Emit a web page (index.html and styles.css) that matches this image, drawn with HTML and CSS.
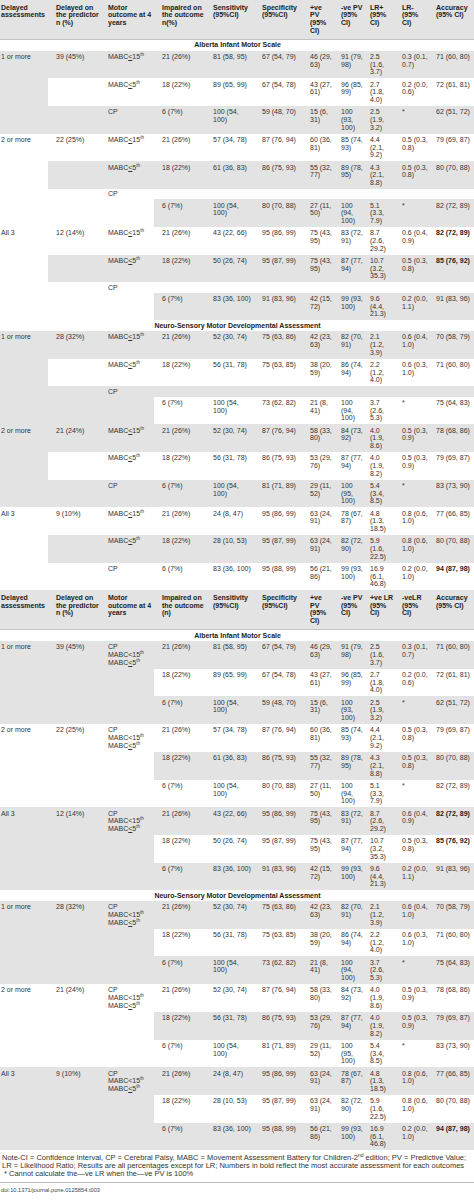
FILE: index.html
```
<!DOCTYPE html>
<html>
<head>
<meta charset="utf-8">
<link rel="stylesheet" href="styles.css">
</head>
<body>
<table class="tbl">
<colgroup><col class="c1"><col class="c2"><col class="c3"><col class="c4"><col class="c5"><col class="c6"><col class="c7"><col class="c8"><col class="c9"><col class="c10"><col class="c11"></colgroup>
<thead>
<tr><th>Delayed<br>assessments</th><th>Delayed on<br>the predictor<br>n (%)</th><th>Motor<br>outcome at 4<br>years</th><th>Impaired on<br>the outcome<br>n(%)</th><th>Sensitivity<br>(95%CI)</th><th>Specificity<br>(95%CI)</th><th>+ve<br>PV<br>(95%<br>CI)</th><th>-ve PV<br>(95%<br>CI)</th><th>LR+<br>(95%<br>CI)</th><th>LR-<br>(95%<br>CI)</th><th>Accuracy<br>(95% CI)</th></tr>
</thead>
<tbody>
<tr class="sec"><td colspan="11">Alberta Infant Motor Scale</td></tr>
<tr class="g"><td rowspan="3">1 or more</td><td>39 (45%)</td><td>MABC<u>&lt;</u>15<sup>th</sup></td><td>21 (26%)</td><td>81 (58, 95)</td><td>67 (54, 79)</td><td>46 (29,<br>63)</td><td>91 (79,<br>98)</td><td>2.5<br>(1.6,<br>3.7)</td><td>0.3 (0.1,<br>0.7)</td><td>71 (60, 80)</td></tr>
<tr><td></td><td>MABC<u>&lt;</u>5<sup>th</sup></td><td>18 (22%)</td><td>89 (65, 99)</td><td>67 (54, 78)</td><td>43 (27,<br>61)</td><td>96 (85,<br>99)</td><td>2.7<br>(1.8,<br>4.0)</td><td>0.2 (0.0,<br>0.6)</td><td>72 (61, 81)</td></tr>
<tr class="g"><td></td><td>CP</td><td>6 (7%)</td><td>100 (54,<br>100)</td><td>59 (48, 70)</td><td>15 (6,<br>31)</td><td>100<br>(93,<br>100)</td><td>2.5<br>(1.9,<br>3.2)</td><td>*</td><td>62 (51, 72)</td></tr>
<tr><td rowspan="4">2 or more</td><td>22 (25%)</td><td>MABC<u>&lt;</u>15<sup>th</sup></td><td>21 (26%)</td><td>57 (34, 78)</td><td>87 (76, 94)</td><td>60 (36,<br>81)</td><td>85 (74,<br>93)</td><td>4.4<br>(2.1,<br>9.2)</td><td>0.5 (0.3,<br>0.8)</td><td>79 (69, 87)</td></tr>
<tr class="g"><td></td><td>MABC<u>&lt;</u>5<sup>th</sup></td><td>18 (22%)</td><td>61 (36, 83)</td><td>86 (75, 93)</td><td>55 (32,<br>77)</td><td>89 (78,<br>95)</td><td>4.3<br>(2.1,<br>8.8)</td><td>0.5 (0.3,<br>0.8)</td><td>80 (70, 88)</td></tr>
<tr class="lbl"><td></td><td>CP</td><td colspan="8"></td></tr>
<tr class="g"><td class="w"></td><td class="w"></td><td>6 (7%)</td><td>100 (54,<br>100)</td><td>80 (70, 88)</td><td>27 (11,<br>50)</td><td>100<br>(94,<br>100)</td><td>5.1<br>(3.3,<br>7.9)</td><td>*</td><td>82 (72, 89)</td></tr>
<tr><td rowspan="4">All 3</td><td>12 (14%)</td><td>MABC<u>&lt;</u>15<sup>th</sup></td><td>21 (26%)</td><td>43 (22, 66)</td><td>95 (86, 99)</td><td>75 (43,<br>95)</td><td>83 (72,<br>91)</td><td>8.7<br>(2.6,<br>29.2)</td><td>0.6 (0.4,<br>0.9)</td><td><b>82 (72, 89)</b></td></tr>
<tr class="g"><td></td><td>MABC<u>&lt;</u>5<sup>th</sup></td><td>18 (22%)</td><td>50 (26, 74)</td><td>95 (87, 99)</td><td>75 (43,<br>95)</td><td>87 (77,<br>94)</td><td>10.7<br>(3.2,<br>35.3)</td><td>0.5 (0.3,<br>0.8)</td><td><b>85 (76, 92)</b></td></tr>
<tr class="lbl"><td></td><td>CP</td><td colspan="8"></td></tr>
<tr class="g"><td class="w"></td><td class="w"></td><td>6 (7%)</td><td>83 (36, 100)</td><td>91 (83, 96)</td><td>42 (15,<br>72)</td><td>99 (93,<br>100)</td><td>9.6<br>(4.4,<br>21.3)</td><td>0.2 (0.0,<br>1.1)</td><td>91 (83, 96)</td></tr>
<tr class="sec"><td colspan="11">Neuro-Sensory Motor Developmental Assessment</td></tr>
<tr class="g"><td rowspan="4">1 or more</td><td>28 (32%)</td><td>MABC<u>&lt;</u>15<sup>th</sup></td><td>21 (26%)</td><td>52 (30, 74)</td><td>75 (63, 86)</td><td>42 (23,<br>63)</td><td>82 (70,<br>91)</td><td>2.1<br>(1.2,<br>3.9)</td><td>0.6 (0.4,<br>1.0)</td><td>70 (58, 79)</td></tr>
<tr><td></td><td>MABC<u>&lt;</u>5<sup>th</sup></td><td>18 (22%)</td><td>56 (31, 78)</td><td>75 (63, 85)</td><td>38 (20,<br>59)</td><td>86 (74,<br>94)</td><td>2.2<br>(1.2,<br>4.0)</td><td>0.6 (0.3,<br>1.0)</td><td>71 (60, 80)</td></tr>
<tr class="lbl g"><td></td><td>CP</td><td colspan="8"></td></tr>
<tr><td class="g"></td><td class="g"></td><td>6 (7%)</td><td>100 (54,<br>100)</td><td>73 (62, 82)</td><td>21 (8,<br>41)</td><td>100<br>(94,<br>100)</td><td>3.7<br>(2.6,<br>5.3)</td><td>*</td><td>75 (64, 83)</td></tr>
<tr class="g"><td rowspan="3">2 or more</td><td>21 (24%)</td><td>MABC<u>&lt;</u>15<sup>th</sup></td><td>21 (26%)</td><td>52 (30, 74)</td><td>87 (76, 94)</td><td>58 (33,<br>80)</td><td>84 (73,<br>92)</td><td>4.0<br>(1.9,<br>8.6)</td><td>0.5 (0.3,<br>0.9)</td><td>78 (68, 86)</td></tr>
<tr><td></td><td>MABC<u>&lt;</u>5<sup>th</sup></td><td>18 (22%)</td><td>56 (31, 78)</td><td>86 (75, 93)</td><td>53 (29,<br>76)</td><td>87 (77,<br>94)</td><td>4.0<br>(1.9,<br>8.2)</td><td>0.5 (0.3,<br>0.9)</td><td>79 (69, 87)</td></tr>
<tr class="g"><td></td><td>CP</td><td>6 (7%)</td><td>100 (54,<br>100)</td><td>81 (71, 89)</td><td>29 (11,<br>52)</td><td>100<br>(95,<br>100)</td><td>5.4<br>(3.4,<br>8.5)</td><td>*</td><td>83 (73, 90)</td></tr>
<tr><td rowspan="3">All 3</td><td>9 (10%)</td><td>MABC<u>&lt;</u>15<sup>th</sup></td><td>21 (26%)</td><td>24 (8, 47)</td><td>95 (86, 99)</td><td>63 (24,<br>91)</td><td>78 (67,<br>87)</td><td>4.8<br>(1.3,<br>18.5)</td><td>0.8 (0.6,<br>1.0)</td><td>77 (66, 85)</td></tr>
<tr class="g"><td></td><td>MABC<u>&lt;</u>5<sup>th</sup></td><td>18 (22%)</td><td>28 (10, 53)</td><td>95 (87, 99)</td><td>63 (24,<br>91)</td><td>82 (72,<br>90)</td><td>5.9<br>(1.6,<br>22.5)</td><td>0.8 (0.6,<br>1.0)</td><td>80 (70, 88)</td></tr>
<tr><td></td><td>CP</td><td>6 (7%)</td><td>83 (36, 100)</td><td>95 (88, 99)</td><td>56 (21,<br>86)</td><td>99 (93,<br>100)</td><td>16.9<br>(6.1,<br>46.8)</td><td>0.2 (0.0,<br>1.0)</td><td><b>94 (87, 98)</b></td></tr>
</tbody>
</table>
<table class="tbl">
<colgroup><col class="c1"><col class="c2"><col class="c3"><col class="c4"><col class="c5"><col class="c6"><col class="c7"><col class="c8"><col class="c9"><col class="c10"><col class="c11"></colgroup>
<thead>
<tr><th>Delayed<br>assessments</th><th>Delayed on<br>the predictor<br>n (%)</th><th>Motor<br>outcome at 4<br>years</th><th>Impaired on<br>the outcome<br>(n)</th><th>Sensitivity<br>(95%CI)</th><th>Specificity<br>(95%CI)</th><th>+ve<br>PV<br>(95%<br>CI)</th><th>-ve PV<br>(95%<br>CI)</th><th>+ve LR<br>(95%<br>CI)</th><th>-veLR<br>(95%<br>CI)</th><th>Accuracy<br>(95% CI)</th></tr>
</thead>
<tbody>
<tr class="sec"><td colspan="11">Alberta Infant Motor Scale</td></tr>
<tr class="g"><td rowspan="3">1 or more</td><td rowspan="3">39 (45%)</td><td rowspan="3">CP<br>MABC&lt;15<sup>th</sup><br>MABC<u>&lt;</u>5<sup>th</sup></td><td>21 (26%)</td><td>81 (58, 95)</td><td>67 (54, 79)</td><td>46 (29,<br>63)</td><td>91 (79,<br>98)</td><td>2.5<br>(1.6,<br>3.7)</td><td>0.3 (0.1,<br>0.7)</td><td>71 (60, 80)</td></tr>
<tr><td>18 (22%)</td><td>89 (65, 99)</td><td>67 (54, 78)</td><td>43 (27,<br>61)</td><td>96 (85,<br>99)</td><td>2.7<br>(1.8,<br>4.0)</td><td>0.2 (0.0,<br>0.6)</td><td>72 (61, 81)</td></tr>
<tr class="g"><td>6 (7%)</td><td>100 (54,<br>100)</td><td>59 (48, 70)</td><td>15 (6,<br>31)</td><td>100<br>(93,<br>100)</td><td>2.5<br>(1.9,<br>3.2)</td><td>*</td><td>62 (51, 72)</td></tr>
<tr><td rowspan="3">2 or more</td><td rowspan="3">22 (25%)</td><td rowspan="3">CP<br>MABC&lt;15<sup>th</sup><br>MABC<u>&lt;</u>5<sup>th</sup></td><td>21 (26%)</td><td>57 (34, 78)</td><td>87 (76, 94)</td><td>60 (36,<br>81)</td><td>85 (74,<br>93)</td><td>4.4<br>(2.1,<br>9.2)</td><td>0.5 (0.3,<br>0.8)</td><td>79 (69, 87)</td></tr>
<tr class="g"><td>18 (22%)</td><td>61 (36, 83)</td><td>86 (75, 93)</td><td>55 (32,<br>77)</td><td>89 (78,<br>95)</td><td>4.3<br>(2.1,<br>8.8)</td><td>0.5 (0.3,<br>0.8)</td><td>80 (70, 88)</td></tr>
<tr><td>6 (7%)</td><td>100 (54,<br>100)</td><td>80 (70, 88)</td><td>27 (11,<br>50)</td><td>100<br>(94,<br>100)</td><td>5.1<br>(3.3,<br>7.9)</td><td>*</td><td>82 (72, 89)</td></tr>
<tr class="g"><td rowspan="3">All 3</td><td rowspan="3">12 (14%)</td><td rowspan="3">CP<br>MABC&lt;15<sup>th</sup><br>MABC<u>&lt;</u>5<sup>th</sup></td><td>21 (26%)</td><td>43 (22, 66)</td><td>95 (86, 99)</td><td>75 (43,<br>95)</td><td>83 (72,<br>91)</td><td>8.7<br>(2.6,<br>29.2)</td><td>0.6 (0.4,<br>0.9)</td><td><b>82 (72, 89)</b></td></tr>
<tr><td>18 (22%)</td><td>50 (26, 74)</td><td>95 (87, 99)</td><td>75 (43,<br>95)</td><td>87 (77,<br>94)</td><td>10.7<br>(3.2,<br>35.3)</td><td>0.5 (0.3,<br>0.8)</td><td><b>85 (76, 92)</b></td></tr>
<tr class="g"><td>6 (7%)</td><td>83 (36, 100)</td><td>91 (83, 96)</td><td>42 (15,<br>72)</td><td>99 (93,<br>100)</td><td>9.6<br>(4.4,<br>21.3)</td><td>0.2 (0.0,<br>1.1)</td><td>91 (83, 96)</td></tr>
<tr class="sec"><td colspan="11">Neuro-Sensory Motor Developmental Assessment</td></tr>
<tr class="g"><td rowspan="3">1 or more</td><td rowspan="3">28 (32%)</td><td rowspan="3">CP<br>MABC&lt;15<sup>th</sup><br>MABC<u>&lt;</u>5<sup>th</sup></td><td>21 (26%)</td><td>52 (30, 74)</td><td>75 (63, 86)</td><td>42 (23,<br>63)</td><td>82 (70,<br>91)</td><td>2.1<br>(1.2,<br>3.9)</td><td>0.6 (0.4,<br>1.0)</td><td>70 (58, 79)</td></tr>
<tr><td>18 (22%)</td><td>56 (31, 78)</td><td>75 (63, 85)</td><td>38 (20,<br>59)</td><td>86 (74,<br>94)</td><td>2.2<br>(1.2,<br>4.0)</td><td>0.6 (0.3,<br>1.0)</td><td>71 (60, 80)</td></tr>
<tr class="g"><td>6 (7%)</td><td>100 (54,<br>100)</td><td>73 (62, 82)</td><td>21 (8,<br>41)</td><td>100<br>(94,<br>100)</td><td>3.7<br>(2.6,<br>5.3)</td><td>*</td><td>75 (64, 83)</td></tr>
<tr><td rowspan="3">2 or more</td><td rowspan="3">21 (24%)</td><td rowspan="3">CP<br>MABC&lt;15<sup>th</sup><br>MABC<u>&lt;</u>5<sup>th</sup></td><td>21 (26%)</td><td>52 (30, 74)</td><td>87 (76, 94)</td><td>58 (33,<br>80)</td><td>84 (73,<br>92)</td><td>4.0<br>(1.9,<br>8.6)</td><td>0.5 (0.3,<br>0.9)</td><td>78 (68, 86)</td></tr>
<tr class="g"><td>18 (22%)</td><td>56 (31, 78)</td><td>86 (75, 93)</td><td>53 (29,<br>76)</td><td>87 (77,<br>94)</td><td>4.0<br>(1.9,<br>8.2)</td><td>0.5 (0.3,<br>0.9)</td><td>79 (69, 87)</td></tr>
<tr><td>6 (7%)</td><td>100 (54,<br>100)</td><td>81 (71, 89)</td><td>29 (11,<br>52)</td><td>100<br>(95,<br>100)</td><td>5.4<br>(3.4,<br>8.5)</td><td>*</td><td>83 (73, 90)</td></tr>
<tr class="g"><td rowspan="3">All 3</td><td rowspan="3">9 (10%)</td><td rowspan="3">CP<br>MABC&lt;15<sup>th</sup><br>MABC<u>&lt;</u>5<sup>th</sup></td><td>21 (26%)</td><td>24 (8, 47)</td><td>95 (86, 99)</td><td>63 (24,<br>91)</td><td>78 (67,<br>87)</td><td>4.8<br>(1.3,<br>18.5)</td><td>0.8 (0.6,<br>1.0)</td><td>77 (66, 85)</td></tr>
<tr><td>18 (22%)</td><td>28 (10, 53)</td><td>95 (87, 99)</td><td>63 (24,<br>91)</td><td>82 (72,<br>90)</td><td>5.9<br>(1.6,<br>22.5)</td><td>0.8 (0.6,<br>1.0)</td><td>80 (70, 88)</td></tr>
<tr class="g"><td>6 (7%)</td><td>83 (36, 100)</td><td>95 (88, 99)</td><td>56 (21,<br>86)</td><td>99 (93,<br>100)</td><td>16.9<br>(6.1,<br>46.8)</td><td>0.2 (0.0,<br>1.0)</td><td><b>94 (87, 98)</b></td></tr>
</tbody>
</table>
<div class="notes">
<p>Note-CI = Confidence Interval, CP = Cerebral Palsy, MABC = Movement Assessment Battery for Children-2<sup>nd</sup> edition; PV = Predictive Value;</p>
<p>LR = Likelihood Ratio; Results are all percentages except for LR; Numbers in bold reflect the most accurate assessment for each outcomes</p>
<p class="star">* Cannot calculate the—ve LR when the—ve PV is 100%</p>
</div>
<div class="doi">doi:10.1371/journal.pone.0125854.t003</div>
</body>
</html>
```
FILE: styles.css
```
html, body {
  margin: 0;
  padding: 0;
  background: #fff;
}
body {
  font-family: "Liberation Sans", Arial, sans-serif;
  font-size: 7px;
  line-height: 7.7px;
  color: #333;
  overflow-x: hidden;
}
.tbl {
  border-collapse: collapse;
  table-layout: fixed;
  width: 481px;
  margin-left: -7px;
}
.c1 { width: 55px; }
.c2 { width: 52px; }
.c3 { width: 54px; }
.c4 { width: 51px; }
.c5 { width: 49px; }
.c6 { width: 48px; }
.c7 { width: 31px; }
.c8 { width: 29px; }
.c9 { width: 32px; }
.c10 { width: 34px; }
.c11 { width: 46px; }
.tbl td,
.tbl th {
  padding: 2.3px 0 2.3px 8px;
  vertical-align: top;
  white-space: nowrap;
  text-align: left;
  background: #fff;
}
.tbl th {
  font-weight: bold;
  color: #222;
  background: #e3e3e3;
  padding: 3.5px 0 4.5px 8px;
  border-bottom: 1px solid #c4c4c4;
}
.sec td {
  text-align: center;
  font-weight: bold;
  color: #222;
  padding: 1.5px 0 1.5px 8px;
}
.lbl td {
  padding-top: 1.25px;
  padding-bottom: 1.25px;
}
.g > td,
td.g {
  background: #e3e3e3;
}
td.w {
  background: #fff;
}
b {
  color: #222;
}
sup {
  font-size: 4.5px;
  line-height: 0;
  vertical-align: 2.8px;
}
.notes {
  margin-top: 3.4px;
  padding: 0 0 3.3px 2px;
  font-size: 7.5px;
  line-height: 8.3px;
  color: #333;
}
.notes p {
  margin: 0;
  white-space: nowrap;
}
.notes sup {
  font-size: 5px;
  vertical-align: 3px;
}
.notes .star {
  padding-left: 2px;
}
.doi {
  border-top: 1px solid #bbb;
  padding: 3.8px 0 0 1px;
  font-size: 5.7px;
  line-height: 7px;
  color: #444;
}
```
